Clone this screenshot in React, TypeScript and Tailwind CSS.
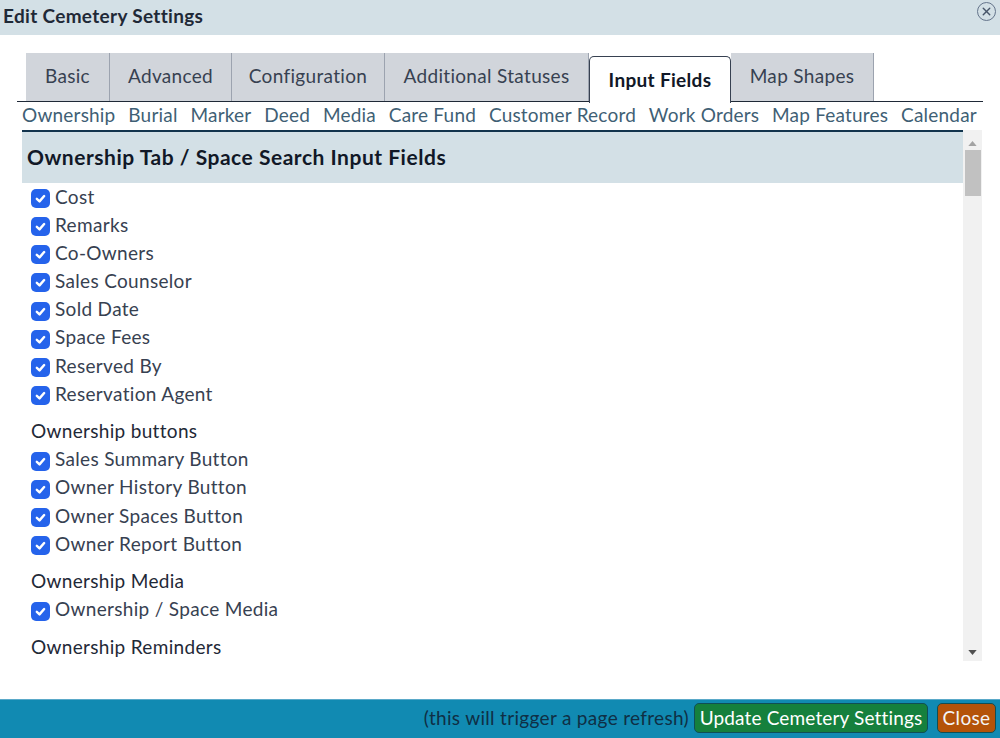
import { X } from "lucide-react"

const tabs = ["Basic", "Advanced", "Configuration", "Additional Statuses", "Input Fields", "Map Shapes"]
const subTabs = ["Ownership", "Burial", "Marker", "Deed", "Media", "Care Fund", "Customer Record", "Work Orders", "Map Features", "Calendar"]

const sections = [
  { title: "", fields: ["Cost", "Remarks", "Co-Owners", "Sales Counselor", "Sold Date", "Space Fees", "Reserved By", "Reservation Agent"] },
  { title: "Ownership buttons", fields: ["Sales Summary Button", "Owner History Button", "Owner Spaces Button", "Owner Report Button"] },
  { title: "Ownership Media", fields: ["Ownership / Space Media"] },
  { title: "Ownership Reminders", fields: [] as string[] },
]

function CheckRow({ label }: { label: string }) {
  return (
    <label className="flex h-[28.13px] items-center">
      <span className="mt-[3px] flex h-[19px] w-[19px] items-center justify-center rounded-[5px] bg-[#2563eb]">
        <svg viewBox="0 0 16 16" className="h-[13px] w-[13px]" fill="none" stroke="white" strokeWidth="3" strokeLinecap="round" strokeLinejoin="round">
          <path d="M3.5 8.5 6.8 11.5 12.5 5" />
        </svg>
      </span>
      <span className="ml-[5px] text-[#374151]">{label}</span>
    </label>
  )
}

export default function App() {
  return (
    <div className="flex h-[738px] w-[1000px] flex-col overflow-hidden bg-white text-[19px] tracking-[0.32px] font-['Lato','Noto_Sans',sans-serif]">
      {/* Title bar */}
      <div className="flex h-[35px] shrink-0 items-start justify-between bg-[#d3e0e6] pl-[3px] pr-[4px]">
        <h1 className="mt-[3px] text-[19px] font-bold leading-[25px] text-[#1f2937]">Edit Cemetery Settings</h1>
        <span className="mt-[2px] flex h-[19px] w-[19px] items-center justify-center rounded-full border border-[#64748b] text-[#475569]">
          <X size={13} strokeWidth={2.5} />
        </span>
      </div>

      {/* Tabs */}
      <div className="mx-[17px] mt-[18px] flex h-[49px] shrink-0 items-end border-b border-[#1f2937] pl-[9px]">
        {tabs.map((tab) =>
          tab === "Input Fields" ? (
            <div
              key={tab}
              className="relative z-10 -mb-[2px] flex h-[47px] w-[142px] items-center justify-center rounded-t-[5px] border border-b-0 border-[#374151] bg-white font-bold text-[#111827]"
            >
              {tab}
            </div>
          ) : (
            <div
              key={tab}
              className={`flex h-[48px] items-center justify-center border-r border-[#9ca3af] bg-[#d1d5db] pb-[2px] text-[#374151] ${
                tab === "Basic" ? "w-[84px]" : tab === "Advanced" ? "w-[122px]" : tab === "Configuration" ? "w-[153px]" : tab === "Additional Statuses" ? "w-[204px]" : "w-[143px]"
              }`}
            >
              {tab}
            </div>
          ),
        )}
      </div>

      {/* Sub tabs */}
      <div className="mx-[22px] flex h-[28px] shrink-0 items-center justify-between pb-[2px] pr-[1px] tracking-[0.2px] text-[#3f5f75]">
        {subTabs.map((tab) => (
          <span key={tab}>{tab}</span>
        ))}
      </div>

      {/* Panel */}
      <div className="ml-[22px] mr-[18px] flex h-[531px] shrink-0">
        <div className="min-w-0 flex-1 overflow-hidden">
          <div className="flex h-[53px] items-center border-t-2 border-[#12344d] bg-[#d3e0e6] pb-[2px] pl-[5px] text-[21px] font-bold tracking-[0.52px] text-[#111827]">
            Ownership Tab / Space Search Input Fields
          </div>
          <div className="pl-[9px]">
            {sections.map((section) => (
              <div key={section.title} className={section.title ? "mt-[9.5px]" : ""}>
                {section.title && <div className="flex h-[28px] items-center text-[#1f2937]">{section.title}</div>}
                {section.fields.map((field) => (
                  <CheckRow key={field} label={field} />
                ))}
              </div>
            ))}
          </div>
        </div>

        {/* Scrollbar */}
        <div className="flex w-[19px] shrink-0 flex-col items-center bg-[#f1f1f1]">
          <svg viewBox="0 0 10 6" className="mt-[11px] h-[5px] w-[9px]" fill="#a3a3a3">
            <path d="M0 6 5 0 10 6Z" />
          </svg>
          <div className="mt-[4px] h-[46px] w-[16px] bg-[#c1c1c1]" />
          <svg viewBox="0 0 10 6" className="mb-[6px] mt-auto h-[5px] w-[9px]" fill="#505050">
            <path d="M0 0 5 6 10 0Z" />
          </svg>
        </div>
      </div>

      {/* Footer */}
      <div className="mt-auto flex h-[39px] shrink-0 items-center justify-end gap-[6px] border-t border-[#5aa9c9] bg-[#118ab2] pb-[2px] pr-[4px]">
        <span className="mr-[-1px] text-[#0f2f45]">(this will trigger a page refresh)</span>
        <button className="h-[30px] w-[234px] rounded-[5px] border border-[#0f4f55] bg-[#15803d] tracking-[0.15px] text-white">Update Cemetery Settings</button>
        <button className="ml-[3px] h-[30px] w-[59px] rounded-[5px] border border-[#0f4f55] bg-[#b45309] text-[#f3f4f6]">Close</button>
      </div>
    </div>
  )
}
